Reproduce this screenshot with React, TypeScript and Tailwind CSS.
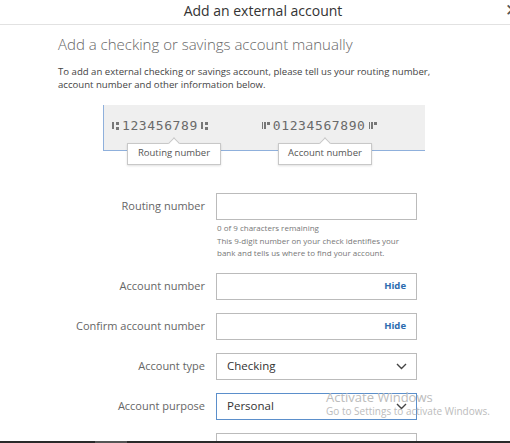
const font = { fontFamily: '"Open Sans", "Liberation Sans", sans-serif' }

function Transit() {
  return (
    <span className="mx-[3px] inline-flex items-center gap-[2px] align-middle">
      <span className="h-[7px] w-[2px] bg-[#777]" />
      <span className="flex flex-col gap-[2px]">
        <span className="h-[3px] w-[3px] bg-[#777]" />
        <span className="h-[3px] w-[3px] bg-[#777]" />
      </span>
    </span>
  )
}

function OnUs() {
  return (
    <span className="mx-[3px] inline-flex items-start gap-[1px] align-middle">
      <span className="h-[7px] w-[1.5px] bg-[#777]" />
      <span className="h-[7px] w-[1.5px] bg-[#777]" />
      <span className="h-[3px] w-[3px] bg-[#777]" />
    </span>
  )
}

function Tip({ label, left }: { label: string; left: string }) {
  return (
    <div className={`absolute top-[38px] ${left} h-[22px] w-[94px] border border-[#c8c8c8] bg-white shadow-[0_1px_2px_rgba(0,0,0,0.12)]`}>
      <div className="absolute -top-[5px] left-[42px] h-[8px] w-[8px] rotate-45 border-l border-t border-[#c8c8c8] bg-white" />
      <div className="relative flex h-full items-center justify-center text-[9.5px] text-[#555]">{label}</div>
    </div>
  )
}

function Chevron() {
  return (
    <svg width="11" height="7" viewBox="0 0 11 7" fill="none" stroke="#444" strokeWidth="1.4">
      <path d="M1 1l4.5 4.5L10 1" />
    </svg>
  )
}

function Row({ label, children, className = '' }: { label: string; children: React.ReactNode; className?: string }) {
  return (
    <div className={`grid grid-cols-[159px_201px] items-center gap-x-[11px] ${className}`}>
      <div className="text-right text-[11px] text-[#666]">{label}</div>
      {children}
    </div>
  )
}

export default function App() {
  return (
    <div style={font} className="flex h-[443px] w-[510px] flex-col overflow-hidden bg-white">
      <div className="relative flex h-[25px] shrink-0 items-center justify-center border-b border-[#e2e2e2] pb-[4px]">
        <span className="ml-[16px] text-[14px] text-[#333]">Add an external account</span>
        <span className="absolute right-[-9px] top-[1px] text-[17px] leading-none text-[#555]">✕</span>
      </div>

      <div className="flex-1 overflow-hidden pl-[58px]">
        <h1 className="mt-[8px] text-[15px] font-light text-[#666]">Add a checking or savings account manually</h1>
        <p className="mt-[9px] w-[384px] text-[9.6px] leading-[13px] text-[#444]">
          To add an external checking or savings account, please tell us your routing number, account number and other information below.
        </p>

        <div className="relative ml-[45px] mt-[14px] h-[62px] w-[322px]">
          <div className="h-[46px] border-b-[1.5px] border-l-[1.5px] border-[#8fb0dc] bg-[#efefef]">
            <div className="flex h-full items-center pb-[3px] pl-[5px] text-[13px] leading-none text-[#6a6a6a]" style={{ fontFamily: '"DejaVu Sans Mono", monospace' }}>
              <Transit />
              <span className="tracking-[0.6px]">123456789</span>
              <Transit />
              <span className="w-[48px]" />
              <OnUs />
              <span className="tracking-[0.6px]">01234567890</span>
              <OnUs />
            </div>
          </div>
          <Tip label="Routing number" left="left-[24px]" />
          <Tip label="Account number" left="left-[175px]" />
        </div>

        <div className="ml-[-12px] mt-[26px]">
          <Row label="Routing number">
            <div className="h-[27px] border border-[#bbb] bg-white" />
          </Row>
          <div className="ml-[171px] mt-[2px] w-[200px] text-[8px] leading-[12px] text-[#777]">
            <div>0 of 9 characters remaining</div>
            <div className="mt-[1px]">This 9-digit number on your check identifies your bank and tells us where to find your account.</div>
          </div>

          <Row label="Account number" className="mt-[14px]">
            <div className="flex h-[27px] items-center justify-end border border-[#bbb] bg-white pr-[10px] text-[9.5px] font-bold text-[#2d6cb0]">Hide</div>
          </Row>
          <Row label="Confirm account number" className="mt-[13px]">
            <div className="flex h-[27px] items-center justify-end border border-[#bbb] bg-white pr-[10px] text-[9.5px] font-bold text-[#2d6cb0]">Hide</div>
          </Row>
          <Row label="Account type" className="mt-[13px]">
            <div className="flex h-[27px] items-center justify-between border border-[#bbb] bg-white pl-[10px] pr-[9px] text-[11.5px] text-[#333]">
              Checking
              <Chevron />
            </div>
          </Row>
          <Row label="Account purpose" className="mt-[13px]">
            <div className="flex h-[27px] items-center justify-between border-[1.5px] border-[#5b8fcb] bg-white pl-[10px] pr-[9px] text-[11.5px] text-[#333]">
              Personal
              <Chevron />
            </div>
          </Row>
          <Row label="" className="mt-[13px]">
            <div className="h-[27px] border border-[#bbb] bg-white" />
          </Row>
        </div>
      </div>

      <div className="flex h-[2px] shrink-0 bg-[#2a2a2a]">
        <div className="ml-[95px] w-[32px] bg-[#555]" />
      </div>

      <div className="pointer-events-none absolute left-[326px] top-[389px] text-[#bcbcbc]">
        <div className="text-[13px] leading-[16px]">Activate Windows</div>
        <div className="text-[10px] leading-[12px]">Go to Settings to activate Windows.</div>
      </div>
    </div>
  )
}
